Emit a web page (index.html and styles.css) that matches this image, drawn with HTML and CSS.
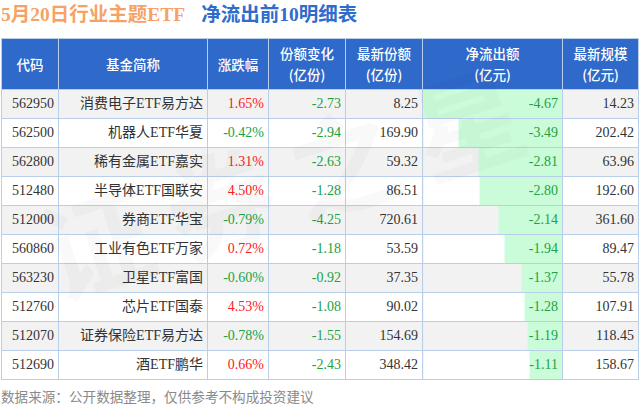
FILE: index.html
```html
<!DOCTYPE html>
<html lang="zh">
<head>
<meta charset="utf-8">
<link rel="stylesheet" href="styles.css">
</head>
<body>
<div class="page">
  <h1 class="title"><span class="t-orange">5月20日行业主题ETF</span><span class="t-blue">净流出前10明细表</span></h1>
  <table class="grid">
    <colgroup>
      <col class="c1"><col class="c2"><col class="c3"><col class="c4"><col class="c5"><col class="c6"><col class="c7">
    </colgroup>
    <thead>
      <tr>
        <th>代码</th>
        <th>基金简称</th>
        <th>涨跌幅</th>
        <th>份额变化<br>(亿份)</th>
        <th>最新份额<br>(亿份)</th>
        <th>净流出额<br>(亿元)</th>
        <th>最新规模<br>(亿元)</th>
      </tr>
    </thead>
    <tbody>
      <tr><td>562950</td><td>消费电子ETF易方达</td><td class="up">1.65%</td><td class="down">-2.73</td><td>8.25</td><td class="down bar" style="--w:100%">-4.67</td><td>14.23</td></tr>
      <tr><td>562500</td><td>机器人ETF华夏</td><td class="down">-0.42%</td><td class="down">-2.94</td><td>169.90</td><td class="down bar" style="--w:74.7%">-3.49</td><td>202.42</td></tr>
      <tr><td>562800</td><td>稀有金属ETF嘉实</td><td class="up">1.31%</td><td class="down">-2.63</td><td>59.32</td><td class="down bar" style="--w:60.2%">-2.81</td><td>63.96</td></tr>
      <tr><td>512480</td><td>半导体ETF国联安</td><td class="up">4.50%</td><td class="down">-1.28</td><td>86.51</td><td class="down bar" style="--w:60.0%">-2.80</td><td>192.60</td></tr>
      <tr><td>512000</td><td>券商ETF华宝</td><td class="down">-0.79%</td><td class="down">-4.25</td><td>720.61</td><td class="down bar" style="--w:45.8%">-2.14</td><td>361.60</td></tr>
      <tr><td>560860</td><td>工业有色ETF万家</td><td class="up">0.72%</td><td class="down">-1.18</td><td>53.59</td><td class="down bar" style="--w:41.5%">-1.94</td><td>89.47</td></tr>
      <tr><td>563230</td><td>卫星ETF富国</td><td class="down">-0.60%</td><td class="down">-0.92</td><td>37.35</td><td class="down bar" style="--w:29.3%">-1.37</td><td>55.78</td></tr>
      <tr><td>512760</td><td>芯片ETF国泰</td><td class="up">4.53%</td><td class="down">-1.08</td><td>90.02</td><td class="down bar" style="--w:27.4%">-1.28</td><td>107.91</td></tr>
      <tr><td>512070</td><td>证券保险ETF易方达</td><td class="down">-0.78%</td><td class="down">-1.55</td><td>154.69</td><td class="down bar" style="--w:25.5%">-1.19</td><td>118.45</td></tr>
      <tr><td>512690</td><td>酒ETF鹏华</td><td class="up">0.66%</td><td class="down">-2.43</td><td>348.42</td><td class="down bar" style="--w:23.8%">-1.11</td><td>158.67</td></tr>
    </tbody>
  </table>
  <p class="source">数据来源：公开数据整理，仅供参考不构成投资建议</p>
  <div class="watermark" aria-hidden="true">证券之星</div>
</div>
</body>
</html>
```

FILE: styles.css
```css
html, body {
  margin: 0;
  padding: 0;
  background: #ffffff;
}
.page {
  position: relative;
  width: 640px;
  height: 410px;
  overflow: hidden;
  font-family: "Liberation Serif", "Noto Sans CJK SC", serif;
}
.title {
  margin: 0;
  height: 38px;
  padding: 0 0 0 1px;
  font-size: 19.5px;
  line-height: 30px;
  font-weight: bold;
  font-family: "Liberation Serif", "Noto Sans CJK SC", serif;
  white-space: nowrap;
}
.t-orange {
  color: #f6a266;
}
.t-blue {
  color: #2f6ccb;
  margin-left: 16px;
}
.grid {
  margin-left: 1px;
  width: 637px;
  border-collapse: collapse;
  table-layout: fixed;
  font-size: 14px;
  color: #333333;
}
.c1 { width: 57px; }
.c2 { width: 149px; }
.c3 { width: 61px; }
.c4 { width: 77px; }
.c5 { width: 77px; }
.c6 { width: 140px; }
.c7 { width: 76px; }
.grid th {
  height: 50px;
  padding: 0;
  background: #2f69c9;
  color: #ffffff;
  font-family: "Noto Sans CJK SC", sans-serif;
  font-weight: 500;
  font-size: 13.5px;
  line-height: 21px;
  text-align: center;
  border: 1px solid #b9cfe9;
}
.grid td {
  height: 28px;
  padding: 0 4px 0 0;
  text-align: right;
  border: 1px solid #b9cfe9;
  white-space: nowrap;
  line-height: 20px;
}
.grid tbody tr:nth-child(odd) td {
  background-color: #f2f2f2;
}
.grid tbody tr td.bar {
  background-image: linear-gradient(to left, #cbfcda var(--w), transparent var(--w));
}
.up {
  color: #ff2020;
}
.down {
  color: #22a23f;
}
.source {
  margin: 6px 0 0 1px;
  font-family: "Noto Sans CJK SC", sans-serif;
  font-size: 13.6px;
  line-height: 20px;
  color: #8a8a8a;
}
.watermark {
  position: absolute;
  left: 30px;
  top: 120px;
  font-family: "Noto Sans CJK SC", sans-serif;
  font-size: 110px;
  font-weight: bold;
  line-height: 1;
  color: rgba(0, 0, 0, 0.022);
  white-space: nowrap;
  pointer-events: none;
  letter-spacing: 20px;
  transform: rotate(-18deg);
}
```
